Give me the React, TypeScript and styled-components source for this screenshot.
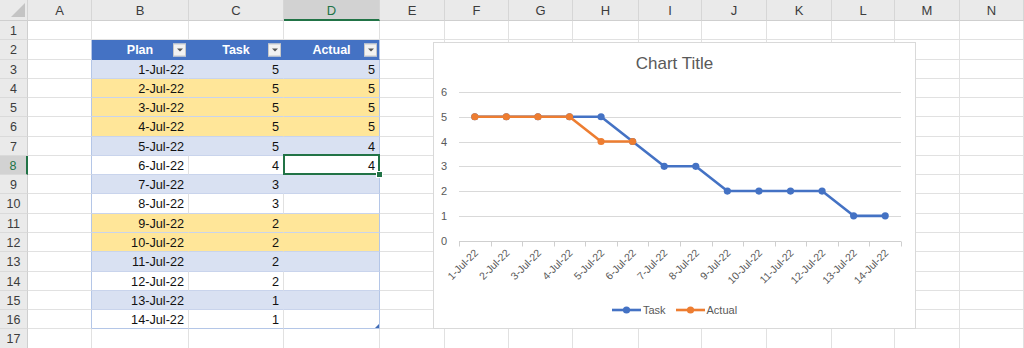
import React from "react";
import styled, { createGlobalStyle, css } from "styled-components";

const COLUMN_WIDTHS = [28, 64, 97, 95, 96, 65, 64, 64, 66, 63, 65, 65, 63, 65, 64];
const LETTERS = ["A", "B", "C", "D", "E", "F", "G", "H", "I", "J", "K", "L", "M", "N"];
const GRID = COLUMN_WIDTHS.map((w) => `${w}px`).join(" ");
const ROW_PITCH = 19.27;
const rowHeight = (n: number) =>
  Math.round(21 + n * ROW_PITCH) - Math.round(21 + (n - 1) * ROW_PITCH);

type Tone = "plain" | "head" | "band" | "hi";

interface Entry {
  plan: string;
  task: number;
  actual?: number;
  tone: Tone;
}

const ENTRIES: Entry[] = [
  { plan: "1-Jul-22", task: 5, actual: 5, tone: "band" },
  { plan: "2-Jul-22", task: 5, actual: 5, tone: "hi" },
  { plan: "3-Jul-22", task: 5, actual: 5, tone: "hi" },
  { plan: "4-Jul-22", task: 5, actual: 5, tone: "hi" },
  { plan: "5-Jul-22", task: 5, actual: 4, tone: "band" },
  { plan: "6-Jul-22", task: 4, actual: 4, tone: "plain" },
  { plan: "7-Jul-22", task: 3, tone: "band" },
  { plan: "8-Jul-22", task: 3, tone: "plain" },
  { plan: "9-Jul-22", task: 2, tone: "hi" },
  { plan: "10-Jul-22", task: 2, tone: "hi" },
  { plan: "11-Jul-22", task: 2, tone: "band" },
  { plan: "12-Jul-22", task: 2, tone: "plain" },
  { plan: "13-Jul-22", task: 1, tone: "band" },
  { plan: "14-Jul-22", task: 1, tone: "plain" },
];

const TONE_BG: Record<Tone, string> = {
  plain: "#ffffff",
  head: "#4472c4",
  band: "#d9e1f2",
  hi: "#ffe699",
};

const GREEN = "#217346";
const GRIDLINE = "#e1e1e1";
const TABLE_LINE = "#b4c6e7";
const BLUE = "#4472c4";
const ORANGE = "#ed7d31";

const GlobalStyle = createGlobalStyle`
  html, body {
    margin: 0;
    padding: 0;
    background: #ffffff;
    overflow: hidden;
  }
  body {
    font-family: "Liberation Sans", Arial, sans-serif;
  }
`;

const Sheet = styled.div`
  position: relative;
  width: 1024px;
  height: 348px;
  overflow: hidden;
  background: #ffffff;
`;

const Line = styled.div<{ $h: number }>`
  display: grid;
  grid-template-columns: ${GRID};
  height: ${(p) => p.$h}px;
`;

const headBase = css`
  box-sizing: border-box;
  display: flex;
  align-items: center;
  justify-content: center;
  background: #eaeaea;
  color: #3c3c3c;
  font-size: 13px;
`;

const Corner = styled.div`
  ${headBase};
  justify-content: flex-end;
  align-items: flex-end;
  padding: 0 2px 3px 0;
  border-right: 1px solid #d4d4d4;
  border-bottom: 1px solid #cfcfcf;
`;

const ColHead = styled.div<{ $active?: boolean }>`
  ${headBase};
  padding-top: 1px;
  border-right: 1px solid #d6d6d6;
  border-bottom: ${(p) => (p.$active ? `2px solid ${GREEN}` : "1px solid #cfcfcf")};
  ${(p) =>
    p.$active &&
    css`
      background: #d2d2d2;
      color: ${GREEN};
    `}
`;

const RowHead = styled.div<{ $active?: boolean }>`
  ${headBase};
  padding-top: 1px;
  font-size: 12.5px;
  border-right: ${(p) => (p.$active ? `2px solid ${GREEN}` : "1px solid #cfcfcf")};
  border-bottom: 1px solid #dadada;
  ${(p) =>
    p.$active &&
    css`
      background: #d2d2d2;
      color: ${GREEN};
    `}
`;

const Cell = styled.div<{ $edge?: boolean }>`
  box-sizing: border-box;
  background: #ffffff;
  border-right: 1px solid ${(p) => (p.$edge ? TABLE_LINE : GRIDLINE)};
  border-bottom: 1px solid ${GRIDLINE};
`;

const TableCell = styled.div<{
  $tone: Tone;
  $last?: boolean;
  $bottom?: boolean;
  $active?: boolean;
}>`
  position: relative;
  box-sizing: border-box;
  display: flex;
  align-items: center;
  justify-content: ${(p) => (p.$tone === "head" ? "center" : "flex-end")};
  padding: 1px 4px 0 0;
  background: ${(p) => TONE_BG[p.$tone]};
  color: ${(p) => (p.$tone === "head" ? "#ffffff" : "#111111")};
  font-size: ${(p) => (p.$tone === "head" ? "12.5px" : "12.7px")};
  font-weight: ${(p) => (p.$tone === "head" ? 700 : 400)};
  white-space: nowrap;
  border-right: 1px solid
    ${(p) =>
      p.$last ? TABLE_LINE : p.$tone === "plain" ? GRIDLINE : TONE_BG[p.$tone]};
  border-bottom: 1px solid
    ${(p) => (p.$tone === "head" ? BLUE : p.$bottom ? TABLE_LINE : "#c9d4ec")};
  ${(p) => p.$tone === "head" && css`padding: 0;`}
  ${(p) =>
    p.$active &&
    css`
      &::after {
        content: "";
        position: absolute;
        left: -1px;
        top: -2px;
        right: -1px;
        bottom: -1px;
        border: 2px solid ${GREEN};
        pointer-events: none;
      }
      &::before {
        content: "";
        position: absolute;
        right: -4px;
        bottom: -4px;
        width: 5px;
        height: 5px;
        background: ${GREEN};
        border: 1px solid #ffffff;
        z-index: 2;
      }
    `}
`;

const FilterButton = styled.span`
  position: absolute;
  right: 2px;
  top: 50%;
  transform: translateY(-50%);
  box-sizing: border-box;
  width: 13px;
  height: 13px;
  background: #f2f2f2;
  border: 1px solid #c8c8c8;
  display: flex;
  align-items: center;
  justify-content: center;

  &::after {
    content: "";
    border-left: 3px solid transparent;
    border-right: 3px solid transparent;
    border-top: 3px solid #555555;
  }
`;

const ResizeMark = styled.span`
  position: absolute;
  right: 0;
  bottom: 0;
  width: 0;
  height: 0;
  border-left: 4px solid transparent;
  border-bottom: 4px solid #3f6bb5;
`;

/* chart */

const ChartFrame = styled.div`
  position: absolute;
  left: 433px;
  top: 42px;
  width: 483px;
  height: 287px;
  box-sizing: border-box;
  border: 1px solid #d9d9d9;
  background: #ffffff;
  display: flex;
  flex-direction: column;
  color: #595959;
  font-family: "Liberation Sans", Arial, sans-serif;
`;

const ChartTitle = styled.div`
  height: 40px;
  box-sizing: border-box;
  padding-top: 10px;
  line-height: 22px;
  text-align: center;
  font-size: 17px;
`;

const Legend = styled.div`
  flex: 1;
  display: flex;
  align-items: center;
  justify-content: center;
  gap: 10px;
  padding-bottom: 6px;
  font-size: 11px;
`;

const LegendItem = styled.div`
  display: flex;
  align-items: center;
  gap: 2px;
`;

const X0 = 25;
const X1 = 467;
const CAT = (X1 - X0) / 14;
const Y0 = 157.6;
const STEP = 24.77;
const xOf = (i: number) => X0 + (i + 0.5) * CAT;
const yOf = (v: number) => Y0 - v * STEP;
const crisp = (y: number) => Math.round(y) + 0.5;

function Series({ values, color }: { values: number[]; color: string }) {
  const pts = values.map((v, i) => `${xOf(i)},${yOf(v)}`).join(" ");
  return (
    <g>
      <polyline
        points={pts}
        fill="none"
        stroke={color}
        strokeWidth={2.6}
        strokeLinejoin="round"
        strokeLinecap="round"
      />
      {values.map((v, i) => (
        <circle key={i} cx={xOf(i)} cy={yOf(v)} r={3.6} fill={color} />
      ))}
    </g>
  );
}

function LegendMark({ color }: { color: string }) {
  return (
    <svg width="29" height="10" viewBox="0 0 29 10">
      <line x1="0" y1="5" x2="29" y2="5" stroke={color} strokeWidth="2.6" />
      <circle cx="14.5" cy="5" r="3.6" fill={color} />
    </svg>
  );
}

function LineChart() {
  const task = ENTRIES.map((e) => e.task);
  const actual = ENTRIES.filter((e) => e.actual !== undefined).map((e) => e.actual as number);

  return (
    <ChartFrame>
      <ChartTitle>Chart Title</ChartTitle>
      <svg width="481" height="215" viewBox="0 0 481 215" style={{ display: "block" }}>
        {[1, 2, 3, 4, 5, 6].map((v) => (
          <line key={v} x1={X0} x2={X1} y1={crisp(yOf(v))} y2={crisp(yOf(v))} stroke="#d9d9d9" />
        ))}
        <line x1={X0} x2={X1} y1={crisp(Y0)} y2={crisp(Y0)} stroke="#cfcfcf" />
        {Array.from({ length: 15 }, (_, k) => {
          const x = Math.round(X0 + k * CAT) + 0.5;
          return <line key={k} x1={x} x2={x} y1={crisp(Y0)} y2={crisp(Y0) + 5} stroke="#cfcfcf" />;
        })}
        {[0, 1, 2, 3, 4, 5, 6].map((v) => (
          <text key={v} x={13} y={yOf(v) + 4} textAnchor="end" fontSize="11" fill="#595959">
            {v}
          </text>
        ))}
        {ENTRIES.map((e, i) => (
          <text
            key={e.plan}
            transform={`translate(${xOf(i) + 4}, ${Y0 + 13}) rotate(-45)`}
            textAnchor="end"
            fontSize="10.5"
            fill="#595959"
          >
            {e.plan}
          </text>
        ))}
        <Series values={task} color={BLUE} />
        <Series values={actual} color={ORANGE} />
      </svg>
      <Legend>
        <LegendItem>
          <LegendMark color={BLUE} />
          Task
        </LegendItem>
        <LegendItem>
          <LegendMark color={ORANGE} />
          Actual
        </LegendItem>
      </Legend>
    </ChartFrame>
  );
}

function TableRow({ n }: { n: number }) {
  if (n === 2) {
    return (
      <>
        {["Plan", "Task", "Actual"].map((h, i) => (
          <TableCell key={h} $tone="head" $last={i === 2}>
            {h}
            <FilterButton />
          </TableCell>
        ))}
      </>
    );
  }
  const e = ENTRIES[n - 3];
  const bottom = n === 16;
  return (
    <>
      <TableCell $tone={e.tone} $bottom={bottom}>
        {e.plan}
      </TableCell>
      <TableCell $tone={e.tone} $bottom={bottom}>
        {e.task}
      </TableCell>
      <TableCell $tone={e.tone} $bottom={bottom} $last $active={n === 8}>
        {e.actual ?? ""}
        {bottom && <ResizeMark />}
      </TableCell>
    </>
  );
}

export default function App() {
  const rows = Array.from({ length: 17 }, (_, i) => i + 1);
  return (
    <>
      <GlobalStyle />
      <Sheet>
        <Line $h={21}>
          <Corner>
            <svg width="14" height="14" viewBox="0 0 14 14">
              <polygon points="0,14 14,14 14,0" fill="#c4c4c4" />
            </svg>
          </Corner>
          {LETTERS.map((l) => (
            <ColHead key={l} $active={l === "D"}>
              {l}
            </ColHead>
          ))}
        </Line>
        {rows.map((n) => {
          const inTable = n >= 2 && n <= 16;
          return (
            <Line key={n} $h={rowHeight(n)}>
              <RowHead $active={n === 8}>{n}</RowHead>
              <Cell $edge={inTable} />
              {inTable ? <TableRow n={n} /> : [1, 2, 3].map((c) => <Cell key={c} />)}
              {LETTERS.slice(4).map((l) => (
                <Cell key={l} />
              ))}
            </Line>
          );
        })}
        <LineChart />
      </Sheet>
    </>
  );
}
